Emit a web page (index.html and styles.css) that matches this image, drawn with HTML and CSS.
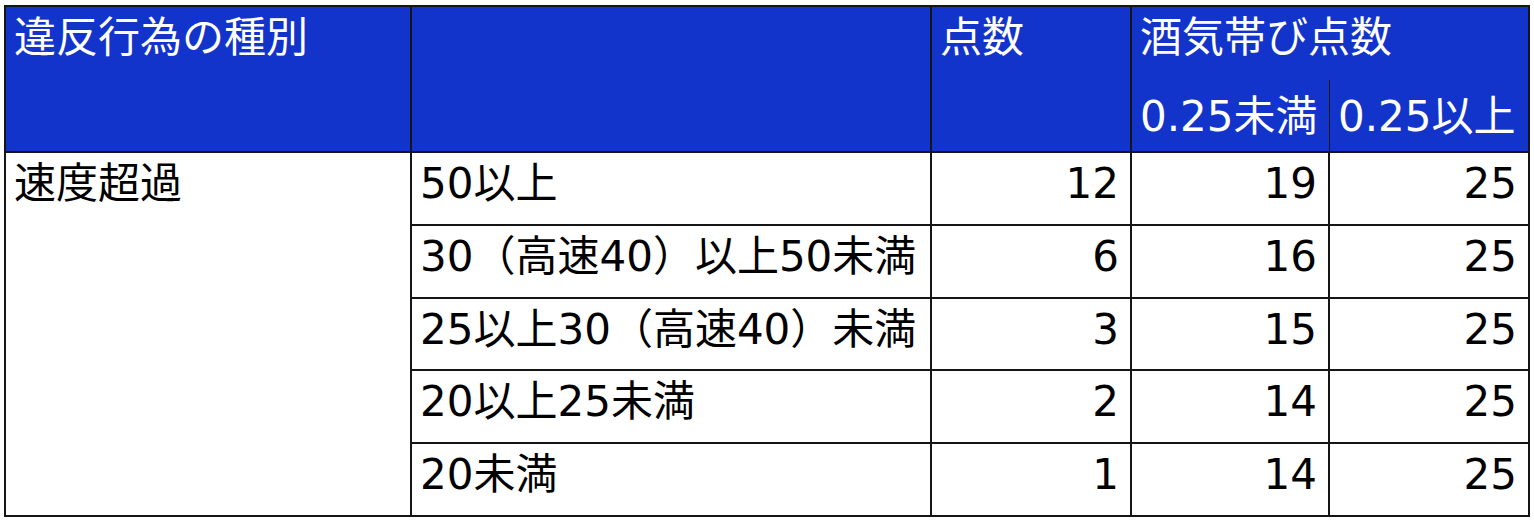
FILE: index.html
```html
<!DOCTYPE html>
<html lang="ja">
<head>
<meta charset="utf-8">
<title>違反行為の種別</title>
<link rel="stylesheet" href="styles.css">
</head>
<body>
<table class="points">
  <colgroup>
    <col class="c-kind">
    <col class="c-detail">
    <col class="c-num">
    <col class="c-low">
    <col class="c-high">
  </colgroup>
  <thead>
    <tr class="hrow">
      <th rowspan="2">違反行為の種別</th>
      <th rowspan="2"></th>
      <th rowspan="2">点数</th>
      <th colspan="2" class="group">酒気帯び点数</th>
    </tr>
    <tr class="hrow">
      <th class="sub sub-low">0.25未満</th>
      <th class="sub">0.25以上</th>
    </tr>
  </thead>
  <tbody>
    <tr class="brow">
      <td rowspan="5">速度超過</td>
      <td>50以上</td>
      <td class="num">12</td>
      <td class="num">19</td>
      <td class="num">25</td>
    </tr>
    <tr class="brow">
      <td>30（高速40）以上50未満</td>
      <td class="num">6</td>
      <td class="num">16</td>
      <td class="num">25</td>
    </tr>
    <tr class="brow">
      <td>25以上30（高速40）未満</td>
      <td class="num">3</td>
      <td class="num">15</td>
      <td class="num">25</td>
    </tr>
    <tr class="brow">
      <td>20以上25未満</td>
      <td class="num">2</td>
      <td class="num">14</td>
      <td class="num">25</td>
    </tr>
    <tr class="brow">
      <td>20未満</td>
      <td class="num">1</td>
      <td class="num">14</td>
      <td class="num">25</td>
    </tr>
  </tbody>
</table>
</body>
</html>
```

FILE: styles.css
```css
html, body {
  margin: 0;
  padding: 0;
  background: #ffffff;
}

body {
  padding: 5px 0 0 4px;
  font-family: "DejaVu Sans", "Noto Sans CJK JP", sans-serif;
  font-size: 42px;
  color: #000000;
}

.points {
  table-layout: fixed;
  width: 1526px;
  border-collapse: separate;
  border-spacing: 0;
  border-top: 2px solid #151515;
  border-left: 2px solid #151515;
}

.c-kind { width: 406px; }
.c-detail { width: 520px; }
.c-num { width: 200px; }
.c-low { width: 198px; }
.c-high { width: 200px; }

.points th,
.points td {
  border-right: 2px solid #151515;
  border-bottom: 2px solid #151515;
  padding: 5px 8px 0 8px;
  line-height: 52px;
  vertical-align: top;
  text-align: left;
  white-space: nowrap;
  overflow: hidden;
}

.points th {
  background: #1334cb;
  color: #ffffff;
  font-weight: normal;
}

.hrow {
  height: 73px;
}

.brow {
  height: 72.8px;
}

.points th.group {
  border-bottom: 0;
}

.points th.sub {
  padding-top: 11px;
}

.points th.sub-low {
  border-right: 1px solid #151515;
}

.points td.num {
  text-align: right;
  padding-right: 11px;
}
```
